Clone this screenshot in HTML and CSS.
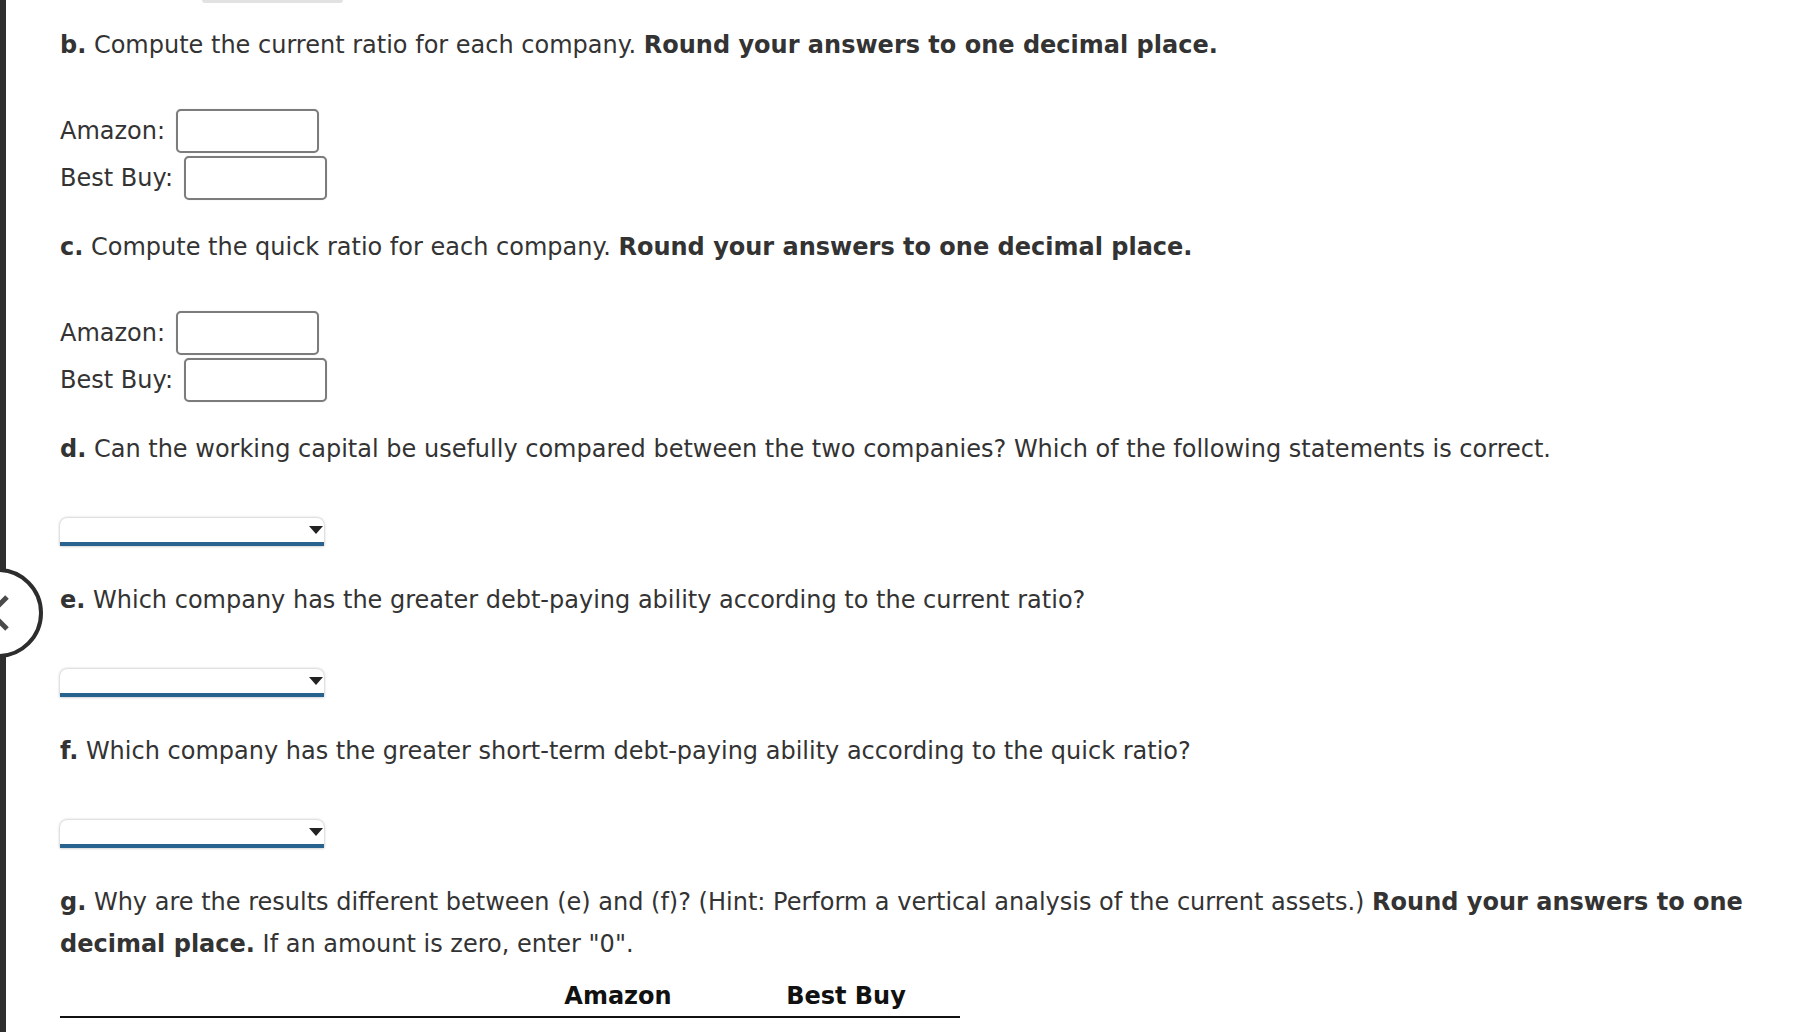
FILE: index.html
```html
<!DOCTYPE html>
<html lang="en">
<head>
<meta charset="utf-8">
<title>Ratios</title>
<link rel="stylesheet" href="styles.css">
</head>
<body>
<div class="page">
  <div class="content">
    <div class="stub"></div>

    <p class="q first"><b>b.</b> Compute the current ratio for each company. <b>Round your answers to one decimal place.</b></p>
    <div class="inputs">
      <div class="row"><span class="lbl">Amazon:</span><span class="box"></span></div>
      <div class="row"><span class="lbl">Best Buy:</span><span class="box"></span></div>
    </div>

    <p class="q"><b>c.</b> Compute the quick ratio for each company. <b>Round your answers to one decimal place.</b></p>
    <div class="inputs">
      <div class="row"><span class="lbl">Amazon:</span><span class="box"></span></div>
      <div class="row"><span class="lbl">Best Buy:</span><span class="box"></span></div>
    </div>

    <p class="q"><b>d.</b> Can the working capital be usefully compared between the two companies? Which of the following statements is correct.</p>
    <div class="select"><span class="arrow"></span></div>

    <p class="q"><b>e.</b> Which company has the greater debt-paying ability according to the current ratio?</p>
    <div class="select"><span class="arrow"></span></div>

    <p class="q"><b>f.</b> Which company has the greater short-term debt-paying ability according to the quick ratio?</p>
    <div class="select"><span class="arrow"></span></div>

    <p class="q"><b>g.</b> Why are the results different between (e) and (f)? (Hint: Perform a vertical analysis of the current assets.) <b>Round your answers to one decimal place.</b> If an amount is zero, enter "0".</p>

    <div class="table">
      <div class="th"></div>
      <div class="th">Amazon</div>
      <div class="th">Best Buy</div>
      <div class="td">Current assets:</div>
      <div class="td"></div>
      <div class="td"></div>
    </div>
  </div>

  <div class="back">
    <svg width="24" height="44" viewBox="0 0 24 44"><path d="M14 6 L-2 22 L14 38" fill="none" stroke="#4a4a4a" stroke-width="5"/></svg>
  </div>
</div>
</body>
</html>
```

FILE: styles.css
```css
html, body {
  margin: 0;
  padding: 0;
  background: #fff;
}
body {
  font-family: "DejaVu Sans", Verdana, sans-serif;
  color: #333;
  font-size: 24px;
  overflow: hidden;
}
.page {
  position: relative;
  min-height: 1032px;
  border-left: 6px solid #2e2e2e;
}
.content {
  padding-left: 54px;
  padding-right: 20px;
}
.stub {
  margin-left: 142px;
  width: 141px;
  height: 3px;
  background: #e2e2e2;
  border-radius: 0 0 4px 4px;
}
.q {
  margin: 26px 0 0 0;
  line-height: 42px;
}
.q.first {
  margin-top: 21px;
}
.q b {
  font-weight: bold;
}
.inputs {
  margin-top: 43px;
  display: flex;
  flex-direction: column;
  gap: 3px;
}
.row {
  display: flex;
  align-items: center;
  gap: 11px;
}
.lbl {
  line-height: 28px;
}
.box {
  display: block;
  width: 139px;
  height: 40px;
  border: 2px solid #7c7c7c;
  border-radius: 5px;
  box-shadow: 0 0 1px rgba(0,0,0,0.25);
  background: #fff;
}
.select {
  position: relative;
  margin: 48px 0 33px 0;
  width: 264px;
  height: 24px;
  background: #fff;
  border-radius: 7px 7px 0 0;
  box-shadow: 0 0 3px rgba(0,0,0,0.35);
  border-bottom: 4px solid #28628f;
}
.arrow {
  position: absolute;
  right: 1px;
  top: 8px;
  width: 0;
  height: 0;
  border-left: 7px solid transparent;
  border-right: 7px solid transparent;
  border-top: 8px solid #222;
}
.select + .q {
  margin-top: 0;
}
.table {
  margin-top: 12px;
  width: 900px;
  display: grid;
  grid-template-columns: 444px 228px 228px;
}
.th {
  font-weight: bold;
  text-align: center;
  line-height: 39px;
  border-bottom: 2px solid #111;
  color: #111;
}
.td {
  line-height: 40px;
  padding-top: 4px;
}
.back {
  position: absolute;
  left: -53px;
  top: 568px;
  width: 82px;
  height: 82px;
  border: 4px solid #2d2d2d;
  border-radius: 50%;
  background: #fff;
  display: flex;
  align-items: center;
  justify-content: flex-end;
}
.back svg {
  margin-right: 22px;
}
```
